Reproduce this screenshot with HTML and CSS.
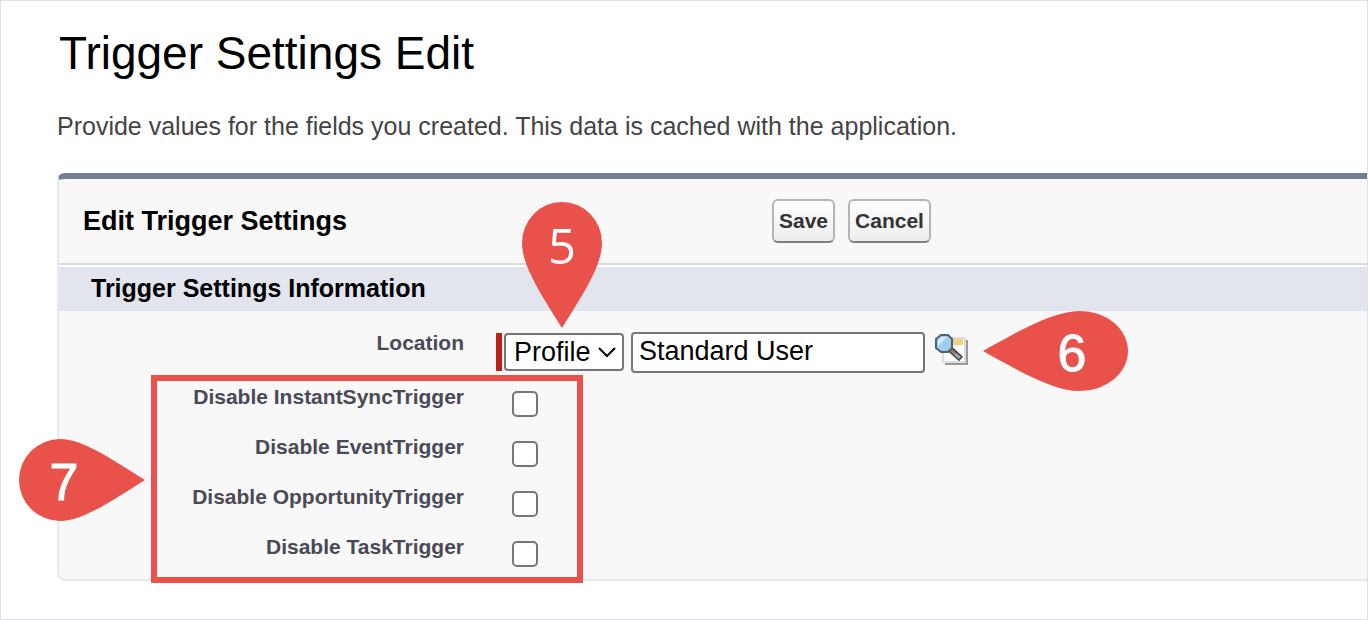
FILE: index.html
```html
<!DOCTYPE html>
<html lang="en">
<head>
    <meta charset="UTF-8">
    <meta name="viewport" content="width=device-width, initial-scale=1.0">
    <title>Trigger Settings Edit</title>
    <link rel="stylesheet" href="styles.css">
</head>
<body>
    <main class="page">
        <h1>Trigger Settings Edit</h1>
        <p class="intro">Provide values for the fields you created. This data is cached with the application.</p>

        <form class="panel">
            <div class="panel-header">
                <h2>Edit Trigger Settings</h2>
                <div class="buttons">
                    <button type="button">Save</button>
                    <button type="button">Cancel</button>
                </div>
            </div>
            <h3 class="section-title">Trigger Settings Information</h3>

            <div class="fields">
                <div class="row location-row">
                    <label for="locationType">Location</label>
                    <div class="lookup">
                        <div class="required">
                            <select id="locationType">
                                <option>Profile</option>
                                <option>User</option>
                            </select>
                            <svg class="chevron" width="18" height="11" viewBox="0 0 18 11">
                                <path d="M1 1l8 8 8-8" fill="none" stroke="#000" stroke-width="2"/>
                            </svg>
                            <svg class="pin pin-5" width="80" height="126" viewBox="0 0 80 126">
                                <path d="M40 126C20 94 0 64 0 41A40 41 0 0 1 80 41C80 64 60 94 40 126z"/>
                                <text x="40" y="62">5</text>
                            </svg>
                        </div>
                        <input type="text" class="location-name" value="Standard User" aria-label="Location name">
                        <a href="#" class="lookup-icon" aria-label="Location lookup">
                            <svg width="34" height="34" viewBox="0 0 34 34">
                                <path d="M10 6h23v25H10z" fill="#999"/>
                                <path d="M8 4h22v24H8z" fill="#fdfdfd" stroke="#dcdcdc" stroke-width="2"/>
                                <path d="M17 5h11v6H17z" fill="#f6d27c"/>
                                <path d="M15 15l11 10" stroke="#34434f" stroke-width="6"/>
                                <path d="M15 15l5 5" stroke="#b8763c" stroke-width="3"/>
                                <path d="M20 20l5 4" stroke="#a6a6a6" stroke-width="3"/>
                                <path d="M6 1h7l4 4v9l-4 4H6l-5-4V5z" fill="#9fcdec" stroke="#4c6375" stroke-width="2"/>
                                <path d="M6 3h6L3 12V6z" fill="#d5eafa"/>
                            </svg>
                        </a>
                        <svg class="pin pin-6" width="145" height="80" viewBox="0 0 145 80">
                            <path d="M0 40C34 21 70 0 97 0A48 40 0 0 1 97 80C70 80 34 59 0 40z"/>
                            <text x="89" y="60">6</text>
                        </svg>
                    </div>
                </div>

                <div class="triggers">
                    <div class="row">
                        <label for="instantSync">Disable InstantSyncTrigger</label>
                        <input type="checkbox" id="instantSync">
                    </div>
                    <div class="row">
                        <label for="event">Disable EventTrigger</label>
                        <input type="checkbox" id="event">
                    </div>
                    <div class="row">
                        <label for="opportunity">Disable OpportunityTrigger</label>
                        <input type="checkbox" id="opportunity">
                    </div>
                    <div class="row">
                        <label for="task">Disable TaskTrigger</label>
                        <input type="checkbox" id="task">
                    </div>
                    <div class="frame"></div>
                    <svg class="pin pin-7" width="126" height="82" viewBox="0 0 126 82">
                        <path d="M126 41C94 21 64 0 41 0A41 41 0 0 0 41 82C64 82 94 61 126 41z"/>
                        <text x="45" y="61">7</text>
                    </svg>
                </div>
            </div>
        </form>
    </main>
</body>
</html>
```
FILE: styles.css
```css
* {
    box-sizing: border-box;
}

body {
    margin: 0;
    background-color: #fff;
    color: #000;
    font-family: "Liberation Sans", Arial, Helvetica, sans-serif;
}

.page {
    min-height: 100vh;
    padding: 25px 0 38px 56px;
    border: 1px solid #dfe1e6;
}

h1 {
    margin: 0 0 0 2px;
    font-size: 46px;
    font-weight: normal;
    line-height: 54px;
}

.intro {
    margin: 32px 0 33px;
    font-size: 25px;
    line-height: 28px;
    color: #444;
}

.panel {
    background-color: #f8f8f8;
    border: 2px solid #eaeaea;
    border-top: 6px solid #747e96;
    border-right: none;
    border-radius: 8px 0 0 8px;
}

.panel-header {
    display: grid;
    grid-template-columns: 689px 1fr;
    align-items: center;
    padding: 20px 0 20px 24px;
    border-bottom: 2px solid #dbdbdb;
}

h2 {
    margin: 0;
    font-size: 27px;
    line-height: 32px;
}

.buttons {
    display: flex;
    gap: 13px;
}

button {
    height: 44px;
    padding: 0 5px;
    font-family: inherit;
    font-size: 21px;
    font-weight: bold;
    color: #333;
    background: linear-gradient(#fff, #ededed);
    border: 2px solid #b5b5b5;
    border-bottom-color: #7f7f7f;
    border-radius: 6px;
    cursor: pointer;
}

.section-title {
    margin: 0;
    padding: 0 32px 2px;
    font-size: 25px;
    line-height: 42px;
    background-color: #e2e4ee;
    border-top: 2px solid #fff;
}

.fields {
    padding-top: 21px;
}

.row {
    display: grid;
    grid-template-columns: 405px 1fr;
    column-gap: 32px;
    align-items: start;
}

.row label {
    font-size: 21px;
    font-weight: bold;
    line-height: 22px;
    text-align: right;
    color: #4a4a56;
}

.location-row {
    margin-bottom: 6px;
}

/* lookup: type drop-down, name and search icon */
.lookup {
    position: relative;
    display: flex;
    align-items: flex-start;
}

.required {
    position: relative;
    margin: 1px 7px 0 0;
    padding-left: 2px;
    border-left: 6px solid #bb2318;
}

select,
.location-name {
    font-family: inherit;
    font-size: 27px;
    color: #000;
    background-color: #fff;
    border: 2px solid #767676;
    border-radius: 4px;
}

select {
    display: block;
    width: 120px;
    height: 38px;
    padding: 0 8px;
    appearance: none;
}

.chevron {
    position: absolute;
    top: 14px;
    right: 8px;
    pointer-events: none;
}

.location-name {
    width: 294px;
    height: 41px;
    padding: 0 6px 2px;
}

.lookup-icon {
    margin: 2px 0 0 10px;
}

.lookup-icon svg {
    display: block;
}

.triggers {
    position: relative;
}

.triggers .row {
    height: 50px;
}

.triggers label {
    padding-top: 7px;
}

.triggers input {
    appearance: none;
    width: 26px;
    height: 26px;
    margin: 12px 0 0 16px;
    background-color: #fff;
    border: 2px solid #767676;
    border-radius: 5px;
}

.triggers input:checked {
    background-color: #0075ff;
}

/* callouts */
.frame {
    position: absolute;
    top: -4px;
    bottom: -4px;
    left: 92px;
    width: 432px;
    border: 6px solid #e9524b;
    pointer-events: none;
}

.pin {
    position: absolute;
    fill: #e9524b;
    pointer-events: none;
}

.pin text {
    fill: #fff;
    stroke: #fff;
    stroke-width: 1px;
    font-size: 52px;
    text-anchor: middle;
}

.pin-5 {
    left: 20px;
    bottom: 43px;
}

.pin-5 text {
    font-family: "Open Sans", sans-serif;
    font-size: 49px;
    stroke: none;
}

.pin-6 {
    top: -21px;
    left: 487px;
}

.pin-7 {
    top: 60px;
    left: -40px;
}
```
